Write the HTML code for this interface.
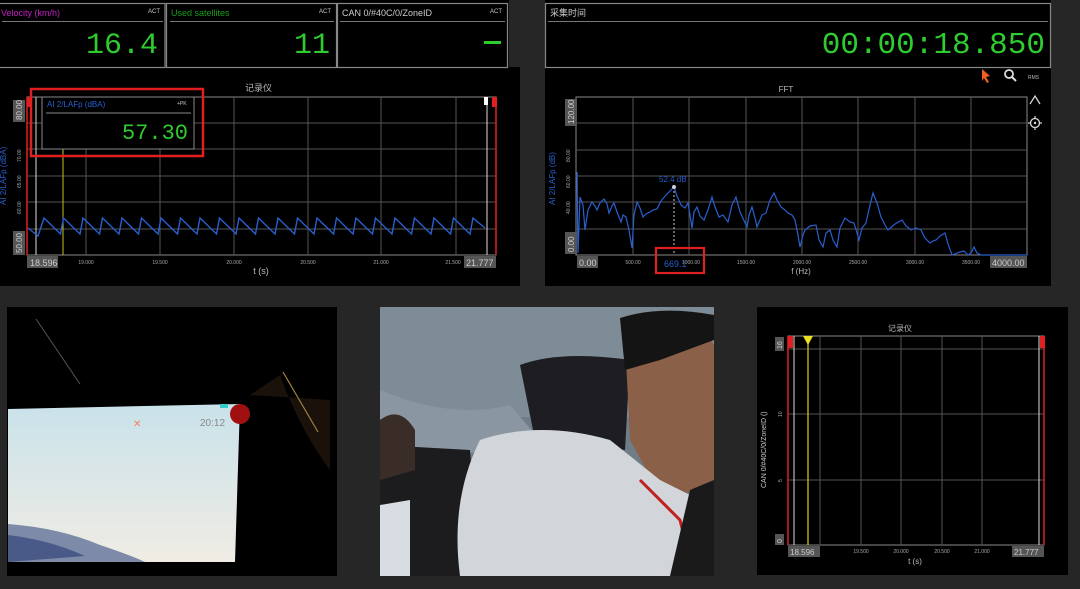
<!DOCTYPE html>
<html><head><meta charset="utf-8"><style>
html,body{margin:0;padding:0;background:#262626;width:1080px;height:589px;overflow:hidden}
svg{display:block}
text{font-family:"Liberation Sans","Noto Sans CJK SC",sans-serif}
.mono{font-family:"Liberation Mono",monospace}
</style></head><body>
<svg width="1080" height="589" viewBox="0 0 1080 589" xmlns="http://www.w3.org/2000/svg">
<rect width="1080" height="589" fill="#262626"/>
<rect x="0" y="0" width="509" height="68" fill="#000"/>
<rect x="0" y="67" width="520" height="219" fill="#000"/>
<g fill="none" stroke="#888" stroke-width="1.2">
<rect x="-1" y="3.5" width="166" height="64"/>
<rect x="166.5" y="3.5" width="170" height="64"/>
<rect x="337.5" y="3.5" width="170" height="64"/>
</g>
<g stroke="#777" stroke-width="1"><line x1="2" y1="21.5" x2="163" y2="21.5"/><line x1="170" y1="21.5" x2="334" y2="21.5"/><line x1="340" y1="21.5" x2="505" y2="21.5"/></g>
<text x="1" y="16" font-size="9" fill="#c020c0">Velocity (km/h)</text>
<text x="171" y="16" font-size="9" fill="#1a9a1a">Used satellites</text>
<text x="342" y="16" font-size="9" fill="#ccc">CAN 0/#40C/0/ZoneID</text>
<text x="148" y="13" font-size="6" fill="#ccc">ACT</text>
<text x="319" y="13" font-size="6" fill="#ccc">ACT</text>
<text x="490" y="13" font-size="6" fill="#ccc">ACT</text>
<text x="158" y="53" font-size="30" fill="#2ecc2e" class="mono" text-anchor="end">16.4</text>
<text x="330" y="53" font-size="30" fill="#2ecc2e" class="mono" text-anchor="end">11</text>
<rect x="484" y="41" width="17" height="3" fill="#2ecc2e"/>
<text x="245" y="91" font-size="9" fill="#bbb">记录仪</text>
<rect x="27" y="97" width="469" height="158" fill="none" stroke="#888"/>
<g stroke="#555" stroke-width="1">
<line x1="86" y1="97" x2="86" y2="255"/><line x1="160" y1="97" x2="160" y2="255"/><line x1="234" y1="97" x2="234" y2="255"/><line x1="308" y1="97" x2="308" y2="255"/><line x1="381" y1="97" x2="381" y2="255"/><line x1="456" y1="97" x2="456" y2="255"/>
<line x1="27" y1="123" x2="496" y2="123"/><line x1="27" y1="149" x2="496" y2="149"/><line x1="27" y1="176" x2="496" y2="176"/><line x1="27" y1="202" x2="496" y2="202"/><line x1="27" y1="229" x2="496" y2="229"/>
</g>
<line x1="27" y1="97" x2="27" y2="255" stroke="#e02020" stroke-width="1.5"/>
<line x1="36" y1="97" x2="36" y2="255" stroke="#ddd"/>
<line x1="487" y1="97" x2="487" y2="255" stroke="#ddd"/>
<line x1="496" y1="97" x2="496" y2="255" stroke="#e02020" stroke-width="1.5"/>
<rect x="27" y="97" width="5" height="10" fill="#e02020"/><rect x="492" y="97" width="5" height="10" fill="#e02020"/>
<rect x="484" y="97" width="4" height="8" fill="#fff"/>
<line x1="63" y1="149" x2="63" y2="255" stroke="#c8c020"/>
<path d="M28,228 L38,236 L44,218 l16.5,16 l3,-16 l16.5,16 l3,-16 l16.5,16 l3,-16 l16.5,16 l3,-16 l16.5,16 l3,-16 l16.5,16 l3,-16 l16.5,16 l3,-16 l16.5,16 l3,-16 l16.5,16 l3,-16 l16.5,16 l3,-16 l16.5,16 l3,-16 l16.5,16 l3,-16 l16.5,16 l3,-16 l16.5,16 l3,-16 l16.5,16 l3,-16 l16.5,16 l3,-16 l16.5,16 l3,-16 l16.5,16 l3,-16 l16.5,16 l3,-16 l16.5,16 l3,-16 l16.5,16 l3,-16 l16.5,16 l3,-16 l12,10" fill="none" stroke="#2a5fd0" stroke-width="1.4"/>
<rect x="13" y="100" width="12" height="22" fill="#555"/><text transform="translate(22,120) rotate(-90)" font-size="8" fill="#ccc">80.00</text>
<rect x="13" y="231" width="12" height="24" fill="#555"/><text transform="translate(22,253) rotate(-90)" font-size="8" fill="#ccc">50.00</text>
<g font-size="5" fill="#aaa"><text transform="translate(21,162) rotate(-90)">70.00</text><text transform="translate(21,188) rotate(-90)">65.00</text><text transform="translate(21,214) rotate(-90)">60.00</text></g>
<text transform="translate(6,205) rotate(-90)" font-size="8" fill="#2a5fd0">AI 2/LAFp (dBA)</text>
<rect x="27" y="256" width="31" height="12" fill="#555"/><text x="30" y="266" font-size="9" fill="#ccc">18.596</text>
<rect x="464" y="256" width="32" height="12" fill="#555"/><text x="466" y="266" font-size="9" fill="#ccc">21.777</text>
<g font-size="5" fill="#aaa" text-anchor="middle"><text x="86" y="264">19.000</text><text x="160" y="264">19.500</text><text x="234" y="264">20.000</text><text x="308" y="264">20.500</text><text x="381" y="264">21.000</text><text x="453" y="264">21.500</text></g>
<text x="261" y="274" font-size="9" fill="#bbb" text-anchor="middle">t (s)</text>
<rect x="42" y="97" width="152" height="52" fill="#000" stroke="#888"/>
<line x1="46" y1="113" x2="191" y2="113" stroke="#888"/>
<text x="47" y="107" font-size="8" fill="#2a5fd0">AI 2/LAFp (dBA)</text>
<text x="177" y="105" font-size="5" fill="#ccc">+PK</text>
<text x="188" y="139" font-size="22" fill="#2ecc2e" class="mono" text-anchor="end">57.30</text>
<rect x="31" y="89" width="172" height="67" fill="none" stroke="#e02020" stroke-width="2.5"/>
<rect x="545" y="0" width="506" height="286" fill="#000"/>
<rect x="545.5" y="3.5" width="505" height="64" fill="none" stroke="#888" stroke-width="1.2"/>
<line x1="548" y1="21.5" x2="1048" y2="21.5" stroke="#777"/>
<text x="550" y="16" font-size="9" fill="#ccc">采集时间</text>
<text x="1045" y="53" font-size="31" fill="#2ecc2e" class="mono" text-anchor="end">00:00:18.850</text>
<path d="M982,69 L990,76 L986,77 L989,82 L987,83 L984,78 L982,81 Z" fill="#f06020"/>
<circle cx="1009" cy="74" r="4" fill="none" stroke="#ddd" stroke-width="1.8"/><line x1="1012" y1="77" x2="1016" y2="81" stroke="#ddd" stroke-width="2"/>
<text x="1028" y="79" font-size="5" fill="#bbb">RMS</text>
<path d="M1030,104 L1035,96 L1040,104" fill="none" stroke="#ddd" stroke-width="1.2"/>
<circle cx="1035" cy="123" r="4.5" fill="none" stroke="#ddd" stroke-width="1.3"/><circle cx="1035" cy="123" r="1.2" fill="#ddd"/>
<g stroke="#ddd" stroke-width="1.2"><line x1="1035" y1="116" x2="1035" y2="119"/><line x1="1035" y1="127" x2="1035" y2="130"/><line x1="1028" y1="123" x2="1031" y2="123"/><line x1="1039" y1="123" x2="1042" y2="123"/></g>
<text x="786" y="92" font-size="8" fill="#bbb" text-anchor="middle">FFT</text>
<rect x="576" y="97" width="451" height="158" fill="none" stroke="#888"/>
<g stroke="#555">
<line x1="633" y1="97" x2="633" y2="255"/><line x1="689" y1="97" x2="689" y2="255"/><line x1="746" y1="97" x2="746" y2="255"/><line x1="802" y1="97" x2="802" y2="255"/><line x1="858" y1="97" x2="858" y2="255"/><line x1="915" y1="97" x2="915" y2="255"/><line x1="971" y1="97" x2="971" y2="255"/>
<line x1="576" y1="123" x2="1027" y2="123"/><line x1="576" y1="150" x2="1027" y2="150"/><line x1="576" y1="176" x2="1027" y2="176"/><line x1="576" y1="202" x2="1027" y2="202"/><line x1="576" y1="229" x2="1027" y2="229"/>
</g>
<polyline fill="none" stroke="#2a5fd0" stroke-width="1.2" points="577,172 578,253 580,197 583,205 585,230 588,210 592,202 595,206 597,210 600,203 604,199 607,204 609,213 612,206 614,203 617,212 621,222 623,215 626,217 629,230 632,248 634,215 637,202 640,208 643,217 646,214 650,212 653,210 657,209 661,201 666,195 670,191 674,187 677,196 681,205 685,208 688,203 690,215 692,228 694,212 697,207 700,216 704,220 708,210 712,197 715,207 719,217 723,215 728,222 732,205 736,197 740,212 747,227 749,215 752,207 755,218 757,227 762,215 766,213 770,200 774,193 777,200 781,207 785,210 788,213 792,215 795,220 798,235 800,247 803,235 805,230 810,226 816,225 819,240 823,247 826,233 830,230 833,240 837,247 840,228 845,218 850,222 854,223 857,233 859,240 862,228 866,223 870,205 873,193 877,203 881,217 885,225 888,230 895,224 902,220 906,226 911,230 916,228 921,230 925,238 930,243 933,241 936,240 940,236 945,233 948,244 952,255 960,252 964,251 968,255 971,253 974,247 977,253 981,255 1015,255 1027,255"/>
<line x1="674" y1="187" x2="674" y2="255" stroke="#ccc" stroke-dasharray="2,2"/>
<circle cx="674" cy="187" r="2" fill="#ccd" />
<text x="659" y="182" font-size="8" fill="#2a5fd0">52.4 dB</text>
<rect x="565" y="99" width="12" height="27" fill="#555"/><text transform="translate(574,124) rotate(-90)" font-size="8" fill="#ccc">120.00</text>
<rect x="565" y="232" width="12" height="22" fill="#555"/><text transform="translate(574,252) rotate(-90)" font-size="8" fill="#ccc">0.00</text>
<g font-size="5" fill="#aaa"><text transform="translate(570,162) rotate(-90)">80.00</text><text transform="translate(570,188) rotate(-90)">60.00</text><text transform="translate(570,214) rotate(-90)">40.00</text></g>
<text transform="translate(555,205) rotate(-90)" font-size="8" fill="#2a5fd0">AI 2/LAFp (dB)</text>
<rect x="577" y="256" width="21" height="12" fill="#555"/><text x="579" y="266" font-size="9" fill="#ccc">0.00</text>
<rect x="990" y="256" width="37" height="12" fill="#555"/><text x="992" y="266" font-size="9" fill="#ccc">4000.00</text>
<g font-size="5" fill="#aaa" text-anchor="middle"><text x="633" y="264">500.00</text><text x="691" y="264">1000.00</text><text x="746" y="264">1500.00</text><text x="802" y="264">2000.00</text><text x="858" y="264">2500.00</text><text x="915" y="264">3000.00</text><text x="971" y="264">3500.00</text></g>
<text x="664" y="267" font-size="9" fill="#2a5fd0">669.1</text>
<text x="801" y="274" font-size="8" fill="#bbb" text-anchor="middle">f (Hz)</text>
<rect x="656" y="248" width="48" height="25" fill="none" stroke="#e02020" stroke-width="2.2"/>
<rect x="7" y="307" width="330" height="269" fill="#000"/>
<linearGradient id="sk" x1="0" y1="0" x2="0" y2="1"><stop offset="0" stop-color="#c9e2ea"/><stop offset="1" stop-color="#f0ece4"/></linearGradient>
<polygon points="8,409 240,404 235,562 8,562" fill="url(#sk)"/>
<path d="M8,524 Q60,528 100,545 Q130,555 145,562 L8,562 Z" fill="#7d8aa8"/>
<path d="M8,535 Q50,540 85,556 L8,562 Z" fill="#4a5a88"/>
<circle cx="240" cy="414" r="10" fill="#a01010"/>
<rect x="220" y="404" width="8" height="4" fill="#3cc"/>
<text x="200" y="426" font-size="10" fill="#888">20:12</text>
<text x="133" y="427" font-size="10" fill="#f08060">✕</text>
<line x1="36" y1="319" x2="80" y2="384" stroke="#555"/>
<path d="M250,395 L330,400 L330,470 Q300,430 280,375 Z" fill="#1a120a"/>
<line x1="283" y1="372" x2="318" y2="432" stroke="#a08040" stroke-width="1.2"/>
<rect x="380" y="307" width="334" height="269" fill="#6f7d89"/>
<rect x="380" y="307" width="334" height="110" fill="#7e8c97"/>
<path d="M380,390 Q450,420 510,405 L540,440 L380,470 Z" fill="#8a97a2"/>
<path d="M380,445 L470,450 L480,576 L380,576 Z" fill="#1c1c1e"/>
<path d="M380,420 Q400,405 415,430 L415,470 L380,480 Z" fill="#3a2c26"/>
<path d="M380,505 L410,500 L410,576 L380,576 Z" fill="#d8dde4"/>
<path d="M520,365 Q560,350 630,360 L625,450 L535,440 Z" fill="#1e1e22"/>
<path d="M625,340 Q660,320 705,330 L714,345 L714,490 L660,495 L630,440 Z" fill="#8a6048"/>
<path d="M620,318 Q660,305 714,315 L714,340 L660,360 L625,370 Z" fill="#141414"/>
<path d="M480,440 Q540,420 610,440 L660,480 L700,500 L714,576 L460,576 Q450,500 480,440 Z" fill="#d2d6da"/>
<path d="M640,480 L680,520 L690,560" fill="none" stroke="#c02020" stroke-width="3"/>
<path d="M690,490 L714,480 L714,576 L670,576 Z" fill="#1a1a1a"/>
<rect x="757" y="307" width="311" height="268" fill="#000"/>
<text x="900" y="331" font-size="8" fill="#bbb" text-anchor="middle">记录仪</text>
<rect x="788" y="336" width="256" height="209" fill="none" stroke="#888"/>
<g stroke="#555">
<line x1="820" y1="336" x2="820" y2="545"/><line x1="861" y1="336" x2="861" y2="545"/><line x1="901" y1="336" x2="901" y2="545"/><line x1="942" y1="336" x2="942" y2="545"/><line x1="982" y1="336" x2="982" y2="545"/>
<line x1="788" y1="349" x2="1044" y2="349"/><line x1="788" y1="414" x2="1044" y2="414"/><line x1="788" y1="480" x2="1044" y2="480"/>
</g>
<line x1="788" y1="336" x2="788" y2="545" stroke="#e02020" stroke-width="1.5"/>
<line x1="794" y1="336" x2="794" y2="545" stroke="#ddd"/>
<line x1="1039" y1="336" x2="1039" y2="545" stroke="#ddd"/>
<line x1="1044" y1="336" x2="1044" y2="545" stroke="#e02020" stroke-width="1.5"/>
<rect x="788" y="336" width="5" height="12" fill="#e02020"/><rect x="1040" y="336" width="5" height="12" fill="#e02020"/>
<line x1="808" y1="336" x2="808" y2="545" stroke="#c8c020" stroke-width="1.3"/>
<polygon points="803,336 813,336 808,345" fill="#e8e020"/>
<rect x="775" y="337" width="9" height="14" fill="#555"/><text transform="translate(782,349) rotate(-90)" font-size="7" fill="#ccc">16</text>
<rect x="775" y="534" width="9" height="11" fill="#555"/><text transform="translate(782,543) rotate(-90)" font-size="7" fill="#ccc">0</text>
<g font-size="5" fill="#aaa"><text transform="translate(782,417) rotate(-90)">10</text><text transform="translate(782,482) rotate(-90)">5</text></g>
<text transform="translate(766,488) rotate(-90)" font-size="7" fill="#ccc">CAN 0/#40C/0/ZoneID ()</text>
<rect x="788" y="546" width="32" height="11" fill="#555"/><text x="790" y="555" font-size="8" fill="#ccc">18.596</text>
<rect x="1012" y="546" width="32" height="11" fill="#555"/><text x="1014" y="555" font-size="8" fill="#ccc">21.777</text>
<g font-size="5" fill="#aaa" text-anchor="middle"><text x="861" y="553">19.500</text><text x="901" y="553">20.000</text><text x="942" y="553">20.500</text><text x="982" y="553">21.000</text></g>
<text x="915" y="564" font-size="8" fill="#bbb" text-anchor="middle">t (s)</text>
</svg>
</body></html>
